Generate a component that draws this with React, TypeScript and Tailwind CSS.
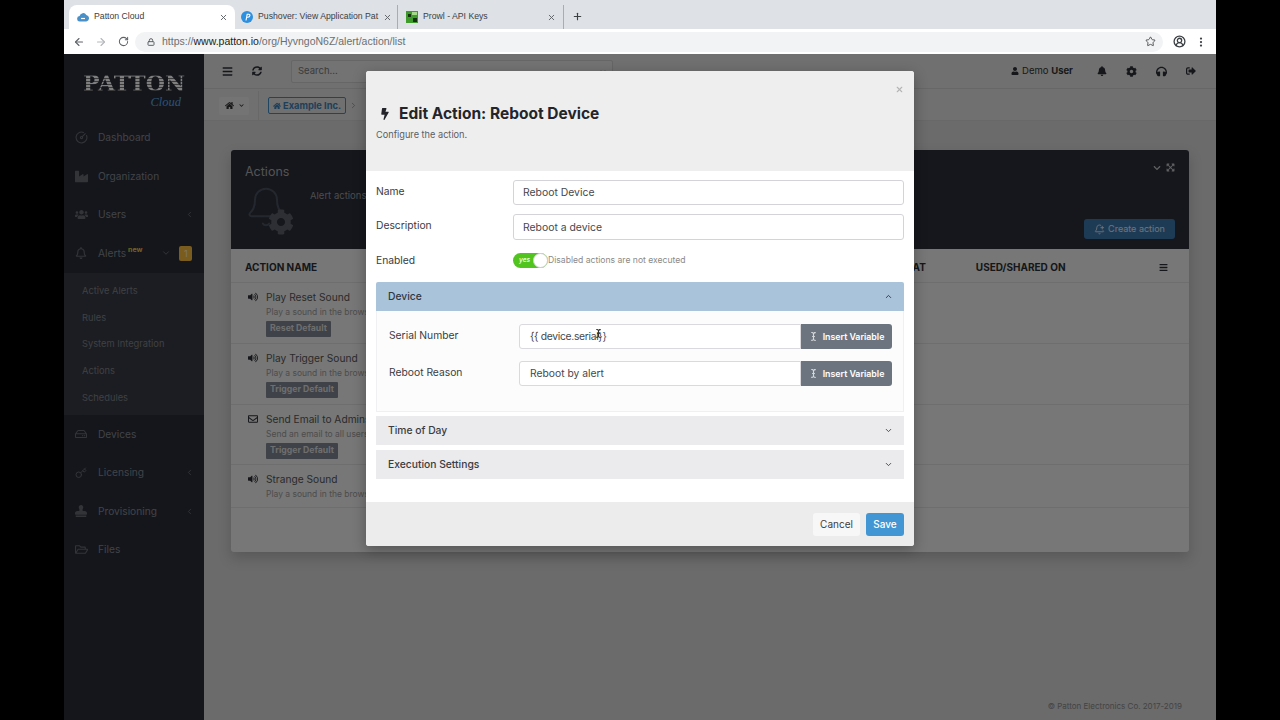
import {
  FaBars,
  FaBell,
  FaBolt,
  FaChevronDown,
  FaCog,
  FaExpandArrowsAlt,
  FaHeadphones,
  FaHome,
  FaICursor,
  FaIndustry,
  FaRegBell,
  FaRegEnvelope,
  FaRegFolderOpen,
  FaRegHdd,
  FaSignOutAlt,
  FaStamp,
  FaSyncAlt,
  FaUser,
  FaUsers,
  FaVolumeUp,
} from "react-icons/fa";
import {
  ArrowLeft,
  ArrowRight,
  Bell,
  BellPlus,
  ChevronDown,
  ChevronLeft,
  ChevronRight,
  ChevronUp,
  CircleGauge,
  CircleUserRound,
  EllipsisVertical,
  Key,
  Lock,
  Plus,
  RotateCw,
  Star,
  X,
} from "lucide-react";

const navTop = [
  { label: "Dashboard", icon: <CircleGauge size={13} /> },
  { label: "Organization", icon: <FaIndustry size={13} /> },
  { label: "Users", icon: <FaUsers size={13} />, arrow: true },
];

const navBottom = [
  { label: "Devices", icon: <FaRegHdd size={12} /> },
  { label: "Licensing", icon: <Key size={12} />, arrow: true },
  { label: "Provisioning", icon: <FaStamp size={12} />, arrow: true },
  { label: "Files", icon: <FaRegFolderOpen size={13} /> },
];

const subNav = ["Active Alerts", "Rules", "System Integration", "Actions", "Schedules"];

const actions = [
  { name: "Play Reset Sound", desc: "Play a sound in the browser", badge: "Reset Default", icon: <FaVolumeUp size={10} />, h: "h-[61px]" },
  { name: "Play Trigger Sound", desc: "Play a sound in the browser", badge: "Trigger Default", icon: <FaVolumeUp size={10} />, h: "h-[61px]" },
  { name: "Send Email to Admins", desc: "Send an email to all users", badge: "Trigger Default", icon: <FaRegEnvelope size={10} />, h: "h-[60px]" },
  { name: "Strange Sound", desc: "Play a sound in the browser", icon: <FaVolumeUp size={10} />, h: "h-[43px]" },
];

function NavItem({ label, icon, arrow }: { label: string; icon: React.ReactNode; arrow?: boolean }) {
  return (
    <div className="flex h-[38.5px] items-center pl-[11px] pr-[10px] text-[#84878e]">
      <span className="flex w-[23px] justify-start text-[#646870]">{icon}</span>
      <span className="flex-1 text-[10.2px]">{label}</span>
      {arrow && <ChevronLeft size={9} className="text-[#70747c]" />}
    </div>
  );
}

function Sidebar() {
  return (
    <aside className="flex w-[140px] shrink-0 flex-col bg-[#282d39]">
      <div className="flex h-[64.5px] flex-col items-center pt-[19px]">
        <span className="bg-[repeating-linear-gradient(180deg,#ffffff_0px,#ffffff_2px,#777777_2px,#777777_3px)] bg-clip-text font-['DejaVu_Serif'] text-[22px] leading-[21px] font-bold text-transparent">
          PATTON
        </span>
        <span className="mt-[2px] self-end pr-[23px] font-['Liberation_Serif'] text-[12.5px] leading-[13px] text-[#5aa5e0] italic">
          Cloud
        </span>
      </div>
      {navTop.map((n) => (
        <NavItem key={n.label} {...n} />
      ))}
      <div className="flex h-[38.5px] items-center pl-[11px] pr-[10px] text-[#84878e]">
        <span className="flex w-[23px] text-[#646870]">
          <FaRegBell size={12} />
        </span>
        <span className="text-[10.2px]">Alerts</span>
        <span className="ml-[2px] -translate-y-[3px] text-[7px] font-bold text-[#f0c040]">new</span>
        <ChevronDown size={10} className="ml-[19px] text-[#70747c]" />
        <span className="ml-[8px] flex h-[15px] w-[13px] items-center justify-center rounded-[2px] bg-[#f5b93c] text-[9px] text-[#fbeccb]">
          1
        </span>
      </div>
      <div className="flex flex-col bg-[#373b44] pt-[5px] pb-[4px]">
        {subNav.map((s) => (
          <div key={s} className="flex h-[26.7px] items-center pl-[18px] text-[9.3px] text-[#7e8187]">
            {s}
          </div>
        ))}
      </div>
      {navBottom.map((n) => (
        <NavItem key={n.label} {...n} />
      ))}
    </aside>
  );
}

function TopBar() {
  return (
    <>
      <div className="flex h-[35px] items-center border-b border-[#cfcfcf] bg-[#e0e0e0] text-[#2d2f36]">
        <FaBars size={11} className="ml-[18px]" />
        <FaSyncAlt size={10} className="ml-[19px]" />
        <div className="ml-[29px] flex h-[23px] w-[322px] items-center justify-between rounded-[2px] border border-[#cdcdcd] bg-[#e6e6e6] px-[6px] pt-[1px] text-[9.5px] text-[#777]">
          Search...
          <FaChevronDown size={6} />
        </div>
        <div className="ml-auto flex items-center">
          <FaUser size={8} />
          <span className="ml-[3px] text-[9.5px] text-[#333]">
            Demo <b className="font-bold">User</b>
          </span>
          <FaBell size={10} className="ml-[24px]" />
          <FaCog size={11} className="ml-[19px]" />
          <FaHeadphones size={11} className="ml-[19px]" />
          <FaSignOutAlt size={10} className="ml-[19px] mr-[20px]" />
        </div>
      </div>
      <div className="flex h-[32px] items-center border-b border-[#d0d0d0] bg-[#e0e0e0] pt-[2px] pl-[15px]">
        <span className="flex h-[18px] w-[30px] items-center justify-center gap-[5px] rounded-[2px] bg-[#e8e8e8] text-[#333]">
          <FaHome size={9} />
          <FaChevronDown size={5} />
        </span>
        <span className="ml-[9px] h-full w-px bg-[#d0d0d0]" />
        <span className="ml-[9px] flex h-[17px] items-center gap-[2px] rounded-[2px] border border-[#3d8ac4] px-[4px] text-[9.3px] font-bold text-[#3d7fb5]">
          <FaHome size={8} />
          Example Inc.
        </span>
        <ChevronRight size={9} className="ml-[3px] text-[#888]" />
      </div>
    </>
  );
}

function ActionsCard() {
  return (
    <section className="mx-[27px] mt-[29px] h-[402px] rounded-[3px] bg-[#eeeeee] shadow-[0_6px_14px_rgba(0,0,0,0.18)]">
      <div className="flex h-[99px] rounded-t-[3px] bg-[#2a2e3a]">
        <div className="flex flex-col pl-[14px] pt-[13px]">
          <span className="text-[12.5px] leading-[17px] text-[#a8a8a8]">Actions</span>
          <div className="relative mt-[5px] -ml-[1px] h-[50px] w-[50px]">
            <Bell size={44} strokeWidth={1.1} className="text-[#4a4f5c]" />
            <FaCog size={26} className="absolute right-0 bottom-0 text-[#5a5e69]" />
          </div>
        </div>
        <span className="ml-[16px] mt-[39px] text-[9.5px] text-[#9a9a9a]">Alert actions</span>
        <div className="ml-auto flex flex-col items-end pr-[14px] pt-[13px]">
          <div className="flex items-center gap-[5px] text-[#c0c0c0]">
            <FaChevronDown size={8} />
            <FaExpandArrowsAlt size={9} />
          </div>
          <span className="mt-[47px] flex h-[20px] w-[91px] items-center justify-center gap-[3px] rounded-[3px] bg-[#3c76ad] text-[9px] text-[#e0e8f0]">
            <BellPlus size={11} />
            Create action
          </span>
        </div>
      </div>
      <div className="flex h-[34px] items-center border-b border-[#dcdcdc] pt-[3px] pl-[14px] pr-[21px] text-[10px] font-bold text-[#2c2e34]">
        <span>ACTION NAME</span>
        <span className="ml-[566px]">FORMAT</span>
        <span className="ml-[50px]">USED/SHARED ON</span>
        <FaBars size={9} className="ml-auto" />
      </div>
      {actions.map((a) => (
        <div key={a.name} className={`flex border-b border-[#dcdcdc] pl-[17px] pt-[7px] ${a.h}`}>
          <span className="mt-[2px] w-[18px] text-[#2c2e34]">{a.icon}</span>
          <div className="flex flex-col items-start">
            <span className="text-[10.2px] leading-[14px] text-[#555]">{a.name}</span>
            <span className="mt-[2px] text-[8.5px] leading-[13px] text-[#9a9a9a]">{a.desc}</span>
            {a.badge && (
              <span className="mt-[2px] flex h-[16px] items-center rounded-[1px] bg-[#7e8492] px-[4px] text-[8.7px] font-bold text-[#dcdcdc]">
                {a.badge}
              </span>
            )}
          </div>
        </div>
      ))}
    </section>
  );
}

function Field({ label, value, box }: { label: string; value: string; box: string }) {
  return (
    <div className="flex">
      <span className="w-[137px] pt-[3px] text-[10.3px] leading-[16px] text-[#3a3c42]">{label}</span>
      <div className={`flex flex-1 items-center rounded-[3px] border border-[#d4d4d8] bg-white pl-[9px] text-[10.4px] text-[#46484e] ${box}`}>
        {value}
      </div>
    </div>
  );
}

function VarField({ label, value, mb, valueClass }: { label: string; value: string; mb?: string; valueClass?: string }) {
  return (
    <div className={`flex items-start ${mb ?? ""}`}>
      <span className="w-[130px] pt-[2px] text-[10.3px] leading-[18px] text-[#3a3c42]">{label}</span>
      <div className={`flex h-[25px] w-[282px] items-center rounded-l-[3px] border border-[#d9d9de] bg-white pl-[10px] text-[10.3px] text-[#46484e] ${valueClass ?? ""}`}>
        {value}
      </div>
      <span className="flex h-[25px] w-[91px] items-center justify-center gap-[5px] rounded-r-[3px] bg-[#6c757f] text-[8.8px] font-semibold text-white">
        <FaICursor size={9} className="text-[#d5d8db]" />
        Insert Variable
      </span>
    </div>
  );
}

function CollapsedRow({ title }: { title: string }) {
  return (
    <div className="flex h-[29px] items-center justify-between bg-[#ebeaec] pl-[12px] pr-[11px] text-[10.3px] font-medium text-[#3a3c42]">
      {title}
      <ChevronDown size={9} strokeWidth={2.4} className="text-[#444]" />
    </div>
  );
}

function EditModal() {
  return (
    <div className="absolute top-[17px] left-[302px] flex h-[475px] w-[548px] flex-col overflow-hidden rounded-[3px] bg-white shadow-[0_4px_14px_rgba(0,0,0,0.3)]">
      <div className="relative h-[100px] bg-[#eeeeee] pl-[10px] pt-[33px]">
        <X size={9} strokeWidth={3} className="absolute top-[14px] right-[10px] text-[#b5b5b5]" />
        <div className="flex items-center">
          <FaBolt size={12} className="ml-[3px] text-[#23252b]" />
          <span className="ml-[8px] text-[15.5px] leading-[20px] font-bold text-[#23252b]">Edit Action: Reboot Device</span>
        </div>
        <p className="mt-[4px] text-[9.2px] leading-[14px] text-[#5c5e64]">Configure the action.</p>
      </div>
      <div className="flex flex-1 flex-col px-[10px] pt-[9px]">
        <Field label="Name" value="Reboot Device" box="mb-[9px] h-[25px]" />
        <Field label="Description" value="Reboot a device" box="mb-[13px] h-[26px] pt-[1px]" />
        <div className="flex h-[15px] items-center">
          <span className="w-[137px] text-[10.3px] text-[#3a3c42]">Enabled</span>
          <span className="relative flex h-[15px] w-[35px] items-center rounded-full bg-[#52c41f] pl-[6px] text-[6.5px] font-semibold text-[#e8ffd8] italic">
            yes
            <span className="absolute top-0 right-0 h-[15px] w-[15px] rounded-full border border-[#d4d4d4] bg-white" />
          </span>
          <span className="text-[8.6px] text-[#8a8a8a]">Disabled actions are not executed</span>
        </div>
        <div className="mt-[14px] flex h-[29px] items-center justify-between rounded-t-[2px] bg-[#a9c3da] pl-[12px] pr-[11px] text-[10.3px] font-medium text-[#33383f]">
          Device
          <ChevronUp size={9} strokeWidth={2.4} className="text-[#334]" />
        </div>
        <div className="relative h-[101px] border-x border-b border-[#f0f0f2] bg-[#fcfcfd] pl-[12px] pt-[13px]">
          <VarField label="Serial Number" value="{{ device.serial}}" mb="mb-[12px]" valueClass="tracking-[-0.3px]" />
          <VarField label="Reboot Reason" value="Reboot by alert" />
          <FaICursor size={9} className="absolute top-[18px] left-[217px] text-[#333]" />
        </div>
        <div className="mt-[4px] flex flex-col gap-[5px]">
          <CollapsedRow title="Time of Day" />
          <CollapsedRow title="Execution Settings" />
        </div>
      </div>
      <div className="flex h-[44px] items-center justify-end gap-[6px] bg-[#ececec] pr-[10px]">
        <span className="flex h-[23px] w-[47px] items-center justify-center rounded-[3px] bg-[#f7f7f8] text-[10px] text-[#3a3c42]">Cancel</span>
        <span className="flex h-[23px] w-[38px] items-center justify-center rounded-[3px] bg-[#4296d3] text-[10px] font-medium text-white">Save</span>
      </div>
    </div>
  );
}

function Tab({ title, icon, active, width }: { title: string; icon: React.ReactNode; active?: boolean; width: string }) {
  return (
    <div className={`flex h-full items-center pl-[8px] pr-[7px] ${width} ${active ? "rounded-t-[8px] bg-white" : "border-r border-[#a9acb0]"}`}>
      {icon}
      <span className="ml-[5px] flex-1 text-[8.7px] whitespace-nowrap text-[#3c4043]">{title}</span>
      <X size={9} strokeWidth={2.5} className="ml-[5px] shrink-0 text-[#5f6368]" />
    </div>
  );
}

function BrowserChrome() {
  return (
    <div className="font-['Liberation_Sans',sans-serif]">
      <div className="flex h-[29px] items-end bg-[#dee1e6] pl-[5px] pt-[5px]">
        <Tab
          active
          width="w-[166px]"
          title="Patton Cloud"
          icon={<svg width="12" height="12" viewBox="0 0 12 12" className="shrink-0"><path d="M3 10.5a2.7 2.7 0 0 1-.4-5.4A3.6 3.6 0 0 1 9.3 4a3.3 3.3 0 0 1 0 6.5z" fill="#4a90c8" /><path d="M4 7.5h4" stroke="#fff" strokeWidth="1.2" /></svg>}
        />
        <Tab
          width="w-[163px]"
          title="Pushover: View Application Pat"
          icon={<svg width="12" height="12" viewBox="0 0 12 12" className="-ml-[2px] shrink-0"><circle cx="6" cy="6" r="6" fill="#2c8fe0" /><path d="M5 9.5 6.2 3.2h1.5c1 0 1.4.6 1.2 1.4-.2 1-1 1.6-2 1.6H5.8" stroke="#fff" strokeWidth="1.1" fill="none" /></svg>}
        />
        <Tab
          width="w-[166px]"
          title="Prowl - API Keys"
          icon={<svg width="12" height="12" viewBox="0 0 12 12" className="shrink-0"><rect width="12" height="12" fill="#3f9b2c" /><path d="M2 3h3v3H2zM7 7h4v4H7z" fill="#14320f" /><path d="M6 1h5v3H6z" fill="#a4d98a" /></svg>}
        />
        <Plus size={11} strokeWidth={2.5} className="mb-[7px] ml-[8px] text-[#3c4043]" />
      </div>
      <div className="flex h-[25px] items-center bg-white pl-[9px] pr-[9px] text-[#5f6368]">
        <ArrowLeft size={12} strokeWidth={2.2} />
        <ArrowRight size={12} strokeWidth={2.2} className="ml-[10px] text-[#b4b7bb]" />
        <RotateCw size={11} strokeWidth={2.2} className="ml-[11px]" />
        <div className="ml-[6px] flex h-[20px] flex-1 items-center rounded-full bg-[#f1f3f4] pl-[12px] pr-[7px]">
          <Lock size={8} strokeWidth={3} />
          <span className="ml-[7px] text-[10.5px] text-[#6b6f73]">
            https://<span className="text-[#202124]">www.patton.io</span>/org/HyvngoN6Z/alert/action/list
          </span>
          <Star size={11} className="ml-auto text-[#4a4d50]" />
        </div>
        <CircleUserRound size={13} strokeWidth={2.4} className="ml-[10px] text-[#3c4043]" />
        <EllipsisVertical size={12} strokeWidth={2.5} className="ml-[9px] text-[#3c4043]" />
      </div>
    </div>
  );
}

export default function App() {
  return (
    <div className="flex h-screen justify-center overflow-hidden bg-black font-['Inter',sans-serif]">
      <div className="flex h-full w-[1152px] flex-col">
        <BrowserChrome />
        <div className="relative flex flex-1 bg-[#d6d6d6]">
          <Sidebar />
          <main className="flex flex-1 flex-col">
            <TopBar />
            <ActionsCard />
            <p className="mt-auto mb-[8px] pr-[34px] text-right text-[8px] text-[#888]">© Patton Electronics Co. 2017-2019</p>
          </main>
          <div className="absolute inset-0 bg-black/50" />
          <EditModal />
        </div>
      </div>
    </div>
  );
}
